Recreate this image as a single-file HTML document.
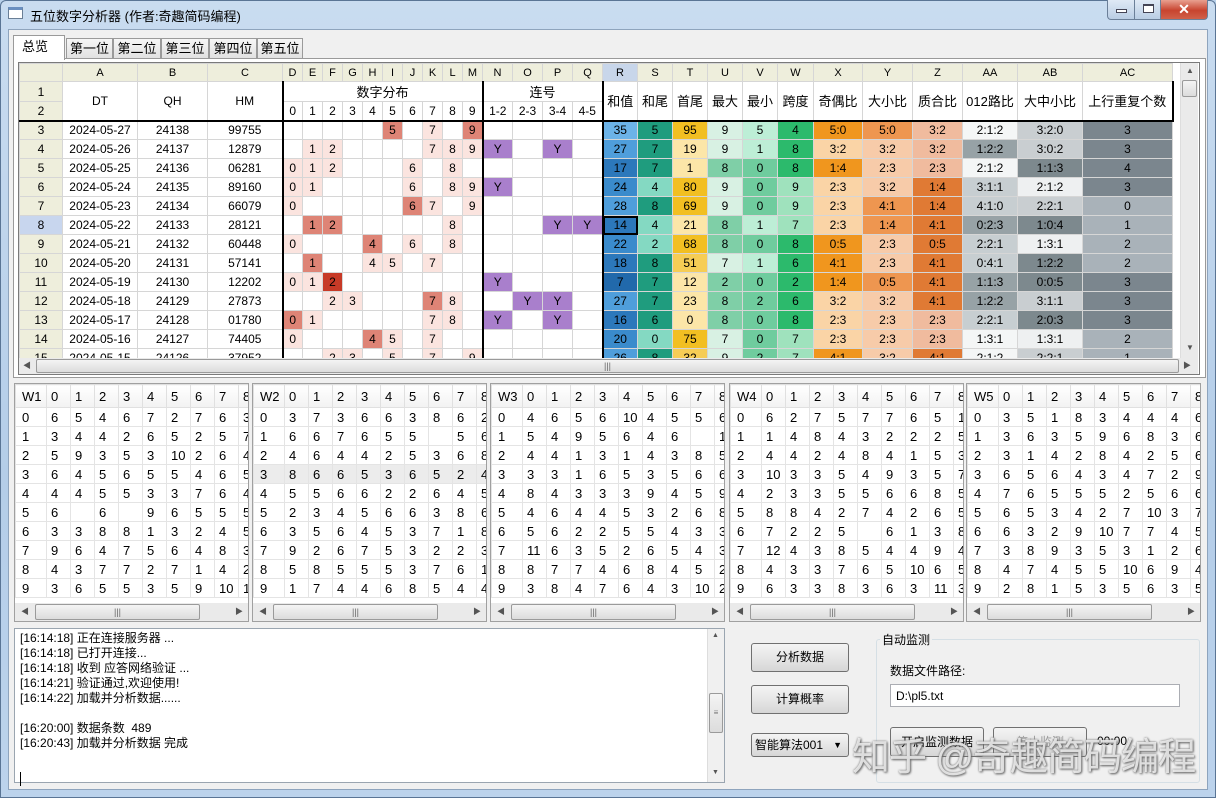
<!DOCTYPE html>
<html><head><meta charset="utf-8">
<style>
*{box-sizing:border-box;margin:0;padding:0}
body{width:1216px;height:798px;overflow:hidden;background:#b9d1ea;font-family:"Liberation Sans","Noto Sans CJK SC",sans-serif;font-size:12px;color:#000;position:relative}
.frame{position:absolute;left:0;top:0;width:1216px;height:798px;background:linear-gradient(#c9dcf0,#b4cde8 60%,#bcd3ec);border:1px solid #5a7595;border-radius:6px 6px 0 0}
.title{position:absolute;left:30px;top:6px;font-size:13px;color:#000}
.ticon{position:absolute;left:8px;top:7px;width:15px;height:12px;border:1px solid #6a7f96;background:#fff;border-top:3px solid #6a8fc0}
.tb{position:absolute;top:0;height:20px;border:1px solid #6b7f98;border-top:none}
.client{position:absolute;left:8px;top:29px;width:1200px;height:761px;background:#f0f0f0;border:1px solid #8ea4bd}
.tab{position:absolute;top:38px;height:21px;border:1px solid #9a9a9a;border-bottom:none;background:linear-gradient(#f6f6f6,#e0e0e0);font-size:13px;text-align:center;line-height:20px}
.tabpanel{position:absolute;left:13px;top:58px;width:1193px;height:320px;border:1px solid #9a9a9a;background:#fff}
.g{position:absolute;left:19px;top:63px;width:1161px;height:295px;overflow:hidden;background:#fff}
.g table{border-collapse:collapse;table-layout:fixed;width:1153px}
.g td,.g th{height:19px;padding:0;border:1px solid #d6d6d6;text-align:center;font-size:12px;font-weight:normal;white-space:nowrap;overflow:hidden}
.g tr.h th{background:#eeeedc;height:18px;font-size:11px}
.g th.rh{background:#eeeedc}
.g .hd{font-size:13px}
.bl{border-left:2px solid #000!important}
.bb td,.bb th.rh{border-bottom:2px solid #000!important}
.l{background:#fbe4df}.d{background:#de8476}.dd{background:#c73a27}.y{background:#a97fcc}
.r1{background:#6cb3e8}.r2{background:#4f9edb}.r3{background:#3a8bcc}.r4{background:#2c78bb}.r5{background:#2169ab}
.s1{background:#1f9c7e}.s2{background:#84d9c2}
.t1{background:#f2bf22}.t2{background:#f6cd55}.t3{background:#fce6a8}
.u1{background:#d8f1e3}.u2{background:#7fcfa7}
.v1{background:#bdeed6}.v2{background:#6fcc9e}
.w1{background:#2cba6c}.w2{background:#9fe2bd}
.x1{background:#f0961e}.x2{background:#fad4a6}
.y1{background:#ee9650}.y2{background:#f7cba9}
.z1{background:#f0bb9e}.z2{background:#e07a34}
.a1{background:#f4f6f6}.a2{background:#c7ced1}.a3{background:#97a2a6}
.b1{background:#eef0f1}.b2{background:#c9ced1}.b3{background:#7d898e}
.c1{background:#7b868e}.c2{background:#a9b2b9}
.sel{outline:2px solid #000;outline-offset:-2px}
.vs{position:absolute;background:#eaeaea;border-left:1px solid #ddd}
.hs{position:absolute;background:#eaeaea}
.thumb{position:absolute;background:linear-gradient(#f4f4f4,#dcdcdc);border:1px solid #9a9a9a;border-radius:2px}
.wp{position:absolute;top:383px;width:235px;height:239px;border:1px solid #a0a0a0;background:#fff;overflow:hidden}
.wp table{border-collapse:collapse;table-layout:fixed;width:247px;font-size:13px}
.wp td{height:19px;border:1px solid #e4e4e4;padding-left:4px;white-space:nowrap;overflow:hidden}
.wp tr:first-child td{height:23px;background:linear-gradient(#fff,#f2f2f2);border-color:#e0e0e0}
.wp td:first-child{padding-left:6px}
.wp .gr td{background:#ececec}
.btn{position:absolute;border:1px solid #707070;border-radius:3px;background:linear-gradient(#f4f4f4,#e6e6e6 50%,#d6d6d6);text-align:center;font-size:12px}
.log{position:absolute;left:14px;top:628px;width:711px;height:155px;border:1px solid #9aa5b0;background:#fff;font-size:12px;line-height:15px;padding:2px 0 0 5px}
</style></head><body>
<div class="frame"></div>
<div class="ticon"></div>
<div class="title">五位数字分析器 (作者:奇趣简码编程)</div>
<div class="tb" style="left:1107px;width:28px;background:linear-gradient(#dfe9f5,#b9cde4);border-radius:0 0 0 4px"><div style="position:absolute;left:8px;top:9px;width:11px;height:4px;border:1px solid #445;background:#fff"></div></div>
<div class="tb" style="left:1134px;width:27px;background:linear-gradient(#dfe9f5,#b9cde4)"><div style="position:absolute;left:8px;top:4px;width:11px;height:9px;border:1px solid #445;border-top-width:2px;background:#fff"></div></div>
<div class="tb" style="left:1160px;width:48px;background:linear-gradient(#e8a090,#c8442f 55%,#d0614a);border-radius:0 0 4px 0;color:#fff;font-weight:bold;font-size:14px;text-align:center;line-height:18px">✕</div>
<div class="client"></div>

<div class="tab" style="left:66px;width:47px">第一位</div>
<div class="tab" style="left:113px;width:48px">第二位</div>
<div class="tab" style="left:161px;width:48px">第三位</div>
<div class="tab" style="left:209px;width:48px">第四位</div>
<div class="tab" style="left:257px;width:46px">第五位</div>
<div class="tabpanel"></div>
<div class="tab" style="left:13px;top:35px;width:52px;height:25px;background:#fff;text-align:left;padding-left:8px;line-height:22px;z-index:2">总览</div>

<div style="position:absolute;left:18px;top:62px;width:1182px;height:313px;border:1px solid #7a7a7a;background:#fff"></div>
<div class="g"><table>
<colgroup><col style="width:43px"><col style="width:75px"><col style="width:70px"><col style="width:75px"><col span="10" style="width:20px"><col span="4" style="width:30px"><col style="width:35px"><col style="width:35px"><col style="width:35px"><col style="width:35px"><col style="width:35px"><col style="width:36px"><col style="width:49px"><col style="width:50px"><col style="width:50px"><col style="width:55px"><col style="width:65px"><col style="width:90px"></colgroup>
<tr class="h"><th></th><th>A</th><th>B</th><th>C</th><th>D</th><th>E</th><th>F</th><th>G</th><th>H</th><th>I</th><th>J</th><th>K</th><th>L</th><th>M</th><th>N</th><th>O</th><th>P</th><th>Q</th><th style="background:#c8d6ea">R</th><th>S</th><th>T</th><th>U</th><th>V</th><th>W</th><th>X</th><th>Y</th><th>Z</th><th>AA</th><th>AB</th><th>AC</th></tr>
<tr><th class="rh">1</th><td rowspan="2" style="border-bottom:2px solid #000">DT</td><td rowspan="2" style="border-bottom:2px solid #000">QH</td><td rowspan="2" style="border-bottom:2px solid #000">HM</td><td colspan="10" class="bl hd">数字分布</td><td colspan="4" class="bl hd">连号</td><td rowspan="2" class="bl hd" style="border-bottom:2px solid #000">和值</td><td rowspan="2" class="hd" style="border-bottom:2px solid #000">和尾</td><td rowspan="2" class="hd" style="border-bottom:2px solid #000">首尾</td><td rowspan="2" class="hd" style="border-bottom:2px solid #000">最大</td><td rowspan="2" class="hd" style="border-bottom:2px solid #000">最小</td><td rowspan="2" class="hd" style="border-bottom:2px solid #000">跨度</td><td rowspan="2" class="hd" style="border-bottom:2px solid #000">奇偶比</td><td rowspan="2" class="hd" style="border-bottom:2px solid #000">大小比</td><td rowspan="2" class="hd" style="border-bottom:2px solid #000">质合比</td><td rowspan="2" class="hd" style="border-bottom:2px solid #000">012路比</td><td rowspan="2" class="hd" style="border-bottom:2px solid #000">大中小比</td><td rowspan="2" class="hd" style="border-bottom:2px solid #000;border-right:2px solid #000">上行重复个数</td></tr>
<tr class="bb"><th class="rh">2</th><td class="bl">0</td><td>1</td><td>2</td><td>3</td><td>4</td><td>5</td><td>6</td><td>7</td><td>8</td><td>9</td><td class="bl">1-2</td><td>2-3</td><td>3-4</td><td>4-5</td></tr>
<tr><th class="rh">3</th><td>2024-05-27</td><td>24138</td><td>99755</td><td class="bl"></td><td></td><td></td><td></td><td></td><td class="d">5</td><td></td><td class="l">7</td><td></td><td class="d">9</td><td class="bl"></td><td></td><td></td><td></td><td class="bl r1">35</td><td class="s1">5</td><td class="t1">95</td><td class="u1">9</td><td class="v1">5</td><td class="w1">4</td><td class="x1">5:0</td><td class="y1">5:0</td><td class="z1">3:2</td><td class="a1">2:1:2</td><td class="b2">3:2:0</td><td class="c1">3</td></tr>
<tr><th class="rh">4</th><td>2024-05-26</td><td>24137</td><td>12879</td><td class="bl"></td><td class="l">1</td><td class="l">2</td><td></td><td></td><td></td><td></td><td class="l">7</td><td class="l">8</td><td class="l">9</td><td class="bl y">Y</td><td></td><td class="y">Y</td><td></td><td class="bl r2">27</td><td class="s1">7</td><td class="t3">19</td><td class="u1">9</td><td class="v1">1</td><td class="w1">8</td><td class="x2">3:2</td><td class="y2">3:2</td><td class="z1">3:2</td><td class="a3">1:2:2</td><td class="b2">3:0:2</td><td class="c1">3</td></tr>
<tr><th class="rh">5</th><td>2024-05-25</td><td>24136</td><td>06281</td><td class="bl l">0</td><td class="l">1</td><td class="l">2</td><td></td><td></td><td></td><td class="l">6</td><td></td><td class="l">8</td><td></td><td class="bl"></td><td></td><td></td><td></td><td class="bl r4">17</td><td class="s1">7</td><td class="t3">1</td><td class="u2">8</td><td class="v2">0</td><td class="w1">8</td><td class="x1">1:4</td><td class="y2">2:3</td><td class="z1">2:3</td><td class="a1">2:1:2</td><td class="b3">1:1:3</td><td class="c1">4</td></tr>
<tr><th class="rh">6</th><td>2024-05-24</td><td>24135</td><td>89160</td><td class="bl l">0</td><td class="l">1</td><td></td><td></td><td></td><td></td><td class="l">6</td><td></td><td class="l">8</td><td class="l">9</td><td class="bl y">Y</td><td></td><td></td><td></td><td class="bl r3">24</td><td class="s2">4</td><td class="t1">80</td><td class="u1">9</td><td class="v2">0</td><td class="w2">9</td><td class="x2">2:3</td><td class="y2">3:2</td><td class="z2">1:4</td><td class="a2">3:1:1</td><td class="b1">2:1:2</td><td class="c1">3</td></tr>
<tr><th class="rh">7</th><td>2024-05-23</td><td>24134</td><td>66079</td><td class="bl l">0</td><td></td><td></td><td></td><td></td><td></td><td class="d">6</td><td class="l">7</td><td></td><td class="l">9</td><td class="bl"></td><td></td><td></td><td></td><td class="bl r2">28</td><td class="s1">8</td><td class="t1">69</td><td class="u1">9</td><td class="v2">0</td><td class="w2">9</td><td class="x2">2:3</td><td class="y1">4:1</td><td class="z2">1:4</td><td class="a2">4:1:0</td><td class="b2">2:2:1</td><td class="c2">0</td></tr>
<tr><th class="rh" style="background:#c8d6ee">8</th><td>2024-05-22</td><td>24133</td><td>28121</td><td class="bl"></td><td class="d">1</td><td class="d">2</td><td></td><td></td><td></td><td></td><td></td><td class="l">8</td><td></td><td class="bl"></td><td></td><td class="y">Y</td><td class="y">Y</td><td class="bl r4 sel">14</td><td class="s2">4</td><td class="t3">21</td><td class="u2">8</td><td class="v1">1</td><td class="w2">7</td><td class="x2">2:3</td><td class="y1">1:4</td><td class="z2">4:1</td><td class="a3">0:2:3</td><td class="b3">1:0:4</td><td class="c2">1</td></tr>
<tr><th class="rh">9</th><td>2024-05-21</td><td>24132</td><td>60448</td><td class="bl l">0</td><td></td><td></td><td></td><td class="d">4</td><td></td><td class="l">6</td><td></td><td class="l">8</td><td></td><td class="bl"></td><td></td><td></td><td></td><td class="bl r3">22</td><td class="s2">2</td><td class="t1">68</td><td class="u2">8</td><td class="v2">0</td><td class="w1">8</td><td class="x1">0:5</td><td class="y2">2:3</td><td class="z2">0:5</td><td class="a2">2:2:1</td><td class="b1">1:3:1</td><td class="c2">2</td></tr>
<tr><th class="rh">10</th><td>2024-05-20</td><td>24131</td><td>57141</td><td class="bl"></td><td class="d">1</td><td></td><td></td><td class="l">4</td><td class="l">5</td><td></td><td class="l">7</td><td></td><td></td><td class="bl"></td><td></td><td></td><td></td><td class="bl r4">18</td><td class="s1">8</td><td class="t2">51</td><td class="u1">7</td><td class="v1">1</td><td class="w1">6</td><td class="x1">4:1</td><td class="y2">2:3</td><td class="z2">4:1</td><td class="a2">0:4:1</td><td class="b3">1:2:2</td><td class="c2">2</td></tr>
<tr><th class="rh">11</th><td>2024-05-19</td><td>24130</td><td>12202</td><td class="bl l">0</td><td class="l">1</td><td class="dd">2</td><td></td><td></td><td></td><td></td><td></td><td></td><td></td><td class="bl y">Y</td><td></td><td></td><td></td><td class="bl r5">7</td><td class="s1">7</td><td class="t3">12</td><td class="u2">2</td><td class="v2">0</td><td class="w1">2</td><td class="x1">1:4</td><td class="y1">0:5</td><td class="z2">4:1</td><td class="a3">1:1:3</td><td class="b3">0:0:5</td><td class="c1">3</td></tr>
<tr><th class="rh">12</th><td>2024-05-18</td><td>24129</td><td>27873</td><td class="bl"></td><td></td><td class="l">2</td><td class="l">3</td><td></td><td></td><td></td><td class="d">7</td><td class="l">8</td><td></td><td class="bl"></td><td class="y">Y</td><td class="y">Y</td><td></td><td class="bl r2">27</td><td class="s1">7</td><td class="t3">23</td><td class="u2">8</td><td class="v2">2</td><td class="w1">6</td><td class="x2">3:2</td><td class="y2">3:2</td><td class="z2">4:1</td><td class="a3">1:2:2</td><td class="b2">3:1:1</td><td class="c1">3</td></tr>
<tr><th class="rh">13</th><td>2024-05-17</td><td>24128</td><td>01780</td><td class="bl d">0</td><td class="l">1</td><td></td><td></td><td></td><td></td><td></td><td class="l">7</td><td class="l">8</td><td></td><td class="bl y">Y</td><td></td><td class="y">Y</td><td></td><td class="bl r4">16</td><td class="s1">6</td><td class="t3">0</td><td class="u2">8</td><td class="v2">0</td><td class="w1">8</td><td class="x2">2:3</td><td class="y2">2:3</td><td class="z1">2:3</td><td class="a2">2:2:1</td><td class="b3">2:0:3</td><td class="c1">3</td></tr>
<tr><th class="rh">14</th><td>2024-05-16</td><td>24127</td><td>74405</td><td class="bl l">0</td><td></td><td></td><td></td><td class="d">4</td><td class="l">5</td><td></td><td class="l">7</td><td></td><td></td><td class="bl"></td><td></td><td></td><td></td><td class="bl r3">20</td><td class="s2">0</td><td class="t1">75</td><td class="u1">7</td><td class="v2">0</td><td class="w2">7</td><td class="x2">2:3</td><td class="y2">2:3</td><td class="z1">2:3</td><td class="a1">1:3:1</td><td class="b1">1:3:1</td><td class="c2">2</td></tr>
<tr><th class="rh">15</th><td>2024-05-15</td><td>24126</td><td>37952</td><td class="bl"></td><td></td><td class="l">2</td><td class="l">3</td><td></td><td class="l">5</td><td></td><td class="l">7</td><td></td><td class="l">9</td><td class="bl"></td><td></td><td></td><td></td><td class="bl r2">26</td><td class="s1">8</td><td class="t2">32</td><td class="u1">9</td><td class="v2">2</td><td class="w2">7</td><td class="x1">4:1</td><td class="y2">3:2</td><td class="z2">4:1</td><td class="a1">2:1:2</td><td class="b2">2:2:1</td><td class="c2">1</td></tr>
</table></div>
<div class="vs" style="left:1180px;top:63px;width:18px;height:295px"><div style="position:absolute;left:5px;top:3px;font-size:8px;color:#555">▲</div><div class="thumb" style="left:1px;top:17px;width:15px;height:17px"></div><div style="position:absolute;left:5px;top:280px;font-size:8px;color:#555">▼</div></div>
<div class="hs" style="left:19px;top:358px;width:1179px;height:16px"><div style="position:absolute;left:4px;top:2px;font-size:8px;color:#555">◀</div><div class="thumb" style="left:17px;top:1px;width:1143px;height:14px;text-align:center;font-size:9px;line-height:12px;color:#666">|||</div><div style="position:absolute;left:1164px;top:2px;font-size:8px;color:#555">▶</div></div>

<!-- W panels -->
<div class="wp" style="left:14px"><table><colgroup><col style="width:31px"><col span="9" style="width:24px"></colgroup>
<tr><td>W1</td><td>0</td><td>1</td><td>2</td><td>3</td><td>4</td><td>5</td><td>6</td><td>7</td><td>8</td></tr>
<tr><td>0</td><td>6</td><td>5</td><td>4</td><td>6</td><td>7</td><td>2</td><td>7</td><td>6</td><td>3</td></tr>
<tr><td>1</td><td>3</td><td>4</td><td>4</td><td>2</td><td>6</td><td>5</td><td>2</td><td>5</td><td>7</td></tr>
<tr><td>2</td><td>5</td><td>9</td><td>3</td><td>5</td><td>3</td><td>10</td><td>2</td><td>6</td><td>4</td></tr>
<tr><td>3</td><td>6</td><td>4</td><td>5</td><td>6</td><td>5</td><td>5</td><td>4</td><td>6</td><td>5</td></tr>
<tr><td>4</td><td>4</td><td>4</td><td>5</td><td>5</td><td>3</td><td>3</td><td>7</td><td>6</td><td>4</td></tr>
<tr><td>5</td><td>6</td><td></td><td>6</td><td></td><td>9</td><td>6</td><td>5</td><td>5</td><td>5</td></tr>
<tr><td>6</td><td>3</td><td>3</td><td>8</td><td>8</td><td>1</td><td>3</td><td>2</td><td>4</td><td>5</td></tr>
<tr><td>7</td><td>9</td><td>6</td><td>4</td><td>7</td><td>5</td><td>6</td><td>4</td><td>8</td><td>3</td></tr>
<tr><td>8</td><td>4</td><td>3</td><td>7</td><td>7</td><td>2</td><td>7</td><td>1</td><td>4</td><td>2</td></tr>
<tr><td>9</td><td>3</td><td>6</td><td>5</td><td>5</td><td>3</td><td>5</td><td>9</td><td>10</td><td>1</td></tr>
</table><div class="hs" style="left:0;top:219px;width:233px;height:18px"><div style="position:absolute;left:6px;top:3px;font-size:8px;color:#555">◀</div><div class="thumb" style="left:20px;top:1px;width:165px;height:16px;text-align:center;font-size:9px;line-height:14px;color:#666">|||</div><div style="position:absolute;left:220px;top:3px;font-size:8px;color:#555">▶</div></div></div>

<div class="wp" style="left:252px"><table><colgroup><col style="width:31px"><col span="9" style="width:24px"></colgroup>
<tr><td>W2</td><td>0</td><td>1</td><td>2</td><td>3</td><td>4</td><td>5</td><td>6</td><td>7</td><td>8</td></tr>
<tr><td>0</td><td>3</td><td>7</td><td>3</td><td>6</td><td>6</td><td>3</td><td>8</td><td>6</td><td>2</td></tr>
<tr><td>1</td><td>6</td><td>6</td><td>7</td><td>6</td><td>5</td><td>5</td><td></td><td>5</td><td>6</td></tr>
<tr><td>2</td><td>4</td><td>6</td><td>4</td><td>4</td><td>2</td><td>5</td><td>3</td><td>6</td><td>8</td></tr>
<tr class="gr"><td>3</td><td>8</td><td>6</td><td>6</td><td>5</td><td>3</td><td>6</td><td>5</td><td>2</td><td>4</td></tr>
<tr><td>4</td><td>5</td><td>5</td><td>6</td><td>6</td><td>2</td><td>2</td><td>6</td><td>4</td><td>5</td></tr>
<tr><td>5</td><td>2</td><td>3</td><td>4</td><td>5</td><td>6</td><td>6</td><td>3</td><td>8</td><td>6</td></tr>
<tr><td>6</td><td>3</td><td>5</td><td>6</td><td>4</td><td>5</td><td>3</td><td>7</td><td>1</td><td>8</td></tr>
<tr><td>7</td><td>9</td><td>2</td><td>6</td><td>7</td><td>5</td><td>3</td><td>2</td><td>2</td><td>3</td></tr>
<tr><td>8</td><td>5</td><td>8</td><td>5</td><td>5</td><td>5</td><td>3</td><td>7</td><td>6</td><td>1</td></tr>
<tr><td>9</td><td>1</td><td>7</td><td>4</td><td>4</td><td>6</td><td>8</td><td>5</td><td>4</td><td>4</td></tr>
</table><div class="hs" style="left:0;top:219px;width:233px;height:18px"><div style="position:absolute;left:6px;top:3px;font-size:8px;color:#555">◀</div><div class="thumb" style="left:20px;top:1px;width:165px;height:16px;text-align:center;font-size:9px;line-height:14px;color:#666">|||</div><div style="position:absolute;left:220px;top:3px;font-size:8px;color:#555">▶</div></div></div>

<div class="wp" style="left:490px"><table><colgroup><col style="width:31px"><col span="9" style="width:24px"></colgroup>
<tr><td>W3</td><td>0</td><td>1</td><td>2</td><td>3</td><td>4</td><td>5</td><td>6</td><td>7</td><td>8</td></tr>
<tr><td>0</td><td>4</td><td>6</td><td>5</td><td>6</td><td>10</td><td>4</td><td>5</td><td>5</td><td>6</td></tr>
<tr><td>1</td><td>5</td><td>4</td><td>9</td><td>5</td><td>6</td><td>4</td><td>6</td><td></td><td>1</td></tr>
<tr><td>2</td><td>4</td><td>4</td><td>1</td><td>3</td><td>1</td><td>4</td><td>3</td><td>8</td><td>5</td></tr>
<tr><td>3</td><td>3</td><td>3</td><td>1</td><td>6</td><td>5</td><td>3</td><td>5</td><td>6</td><td>6</td></tr>
<tr><td>4</td><td>8</td><td>4</td><td>3</td><td>3</td><td>3</td><td>9</td><td>4</td><td>5</td><td>9</td></tr>
<tr><td>5</td><td>4</td><td>6</td><td>4</td><td>4</td><td>5</td><td>3</td><td>2</td><td>6</td><td>8</td></tr>
<tr><td>6</td><td>5</td><td>6</td><td>2</td><td>2</td><td>5</td><td>5</td><td>4</td><td>3</td><td>3</td></tr>
<tr><td>7</td><td>11</td><td>6</td><td>3</td><td>5</td><td>2</td><td>6</td><td>5</td><td>4</td><td>3</td></tr>
<tr><td>8</td><td>8</td><td>7</td><td>7</td><td>4</td><td>6</td><td>8</td><td>4</td><td>5</td><td>2</td></tr>
<tr><td>9</td><td>3</td><td>8</td><td>4</td><td>7</td><td>6</td><td>4</td><td>3</td><td>10</td><td>2</td></tr>
</table><div class="hs" style="left:0;top:219px;width:233px;height:18px"><div style="position:absolute;left:6px;top:3px;font-size:8px;color:#555">◀</div><div class="thumb" style="left:20px;top:1px;width:165px;height:16px;text-align:center;font-size:9px;line-height:14px;color:#666">|||</div><div style="position:absolute;left:220px;top:3px;font-size:8px;color:#555">▶</div></div></div>

<div class="wp" style="left:729px"><table><colgroup><col style="width:31px"><col span="9" style="width:24px"></colgroup>
<tr><td>W4</td><td>0</td><td>1</td><td>2</td><td>3</td><td>4</td><td>5</td><td>6</td><td>7</td><td>8</td></tr>
<tr><td>0</td><td>6</td><td>2</td><td>7</td><td>5</td><td>7</td><td>7</td><td>6</td><td>5</td><td>1</td></tr>
<tr><td>1</td><td>1</td><td>4</td><td>8</td><td>4</td><td>3</td><td>2</td><td>2</td><td>2</td><td>5</td></tr>
<tr><td>2</td><td>4</td><td>4</td><td>2</td><td>4</td><td>8</td><td>4</td><td>1</td><td>5</td><td>3</td></tr>
<tr><td>3</td><td>10</td><td>3</td><td>3</td><td>5</td><td>4</td><td>9</td><td>3</td><td>5</td><td>7</td></tr>
<tr><td>4</td><td>2</td><td>3</td><td>3</td><td>5</td><td>5</td><td>6</td><td>6</td><td>8</td><td>5</td></tr>
<tr><td>5</td><td>8</td><td>8</td><td>4</td><td>2</td><td>7</td><td>4</td><td>2</td><td>6</td><td>5</td></tr>
<tr><td>6</td><td>7</td><td>2</td><td>2</td><td>5</td><td></td><td>6</td><td>1</td><td>3</td><td>8</td></tr>
<tr><td>7</td><td>12</td><td>4</td><td>3</td><td>8</td><td>5</td><td>4</td><td>4</td><td>9</td><td>4</td></tr>
<tr><td>8</td><td>4</td><td>3</td><td>3</td><td>7</td><td>6</td><td>5</td><td>10</td><td>6</td><td>5</td></tr>
<tr><td>9</td><td>6</td><td>3</td><td>3</td><td>8</td><td>3</td><td>6</td><td>3</td><td>11</td><td>3</td></tr>
</table><div class="hs" style="left:0;top:219px;width:233px;height:18px"><div style="position:absolute;left:6px;top:3px;font-size:8px;color:#555">◀</div><div class="thumb" style="left:20px;top:1px;width:165px;height:16px;text-align:center;font-size:9px;line-height:14px;color:#666">|||</div><div style="position:absolute;left:220px;top:3px;font-size:8px;color:#555">▶</div></div></div>

<div class="wp" style="left:966px"><table><colgroup><col style="width:31px"><col span="9" style="width:24px"></colgroup>
<tr><td>W5</td><td>0</td><td>1</td><td>2</td><td>3</td><td>4</td><td>5</td><td>6</td><td>7</td><td>8</td></tr>
<tr><td>0</td><td>3</td><td>5</td><td>1</td><td>8</td><td>3</td><td>4</td><td>4</td><td>4</td><td>6</td></tr>
<tr><td>1</td><td>3</td><td>6</td><td>3</td><td>5</td><td>9</td><td>6</td><td>8</td><td>3</td><td>6</td></tr>
<tr><td>2</td><td>3</td><td>1</td><td>4</td><td>2</td><td>8</td><td>4</td><td>2</td><td>5</td><td>6</td></tr>
<tr><td>3</td><td>6</td><td>5</td><td>6</td><td>4</td><td>3</td><td>4</td><td>7</td><td>2</td><td>9</td></tr>
<tr><td>4</td><td>7</td><td>6</td><td>5</td><td>5</td><td>5</td><td>2</td><td>5</td><td>6</td><td>6</td></tr>
<tr><td>5</td><td>6</td><td>5</td><td>3</td><td>4</td><td>2</td><td>7</td><td>10</td><td>3</td><td>7</td></tr>
<tr><td>6</td><td>6</td><td>3</td><td>2</td><td>9</td><td>10</td><td>7</td><td>7</td><td>4</td><td>5</td></tr>
<tr><td>7</td><td>3</td><td>8</td><td>9</td><td>3</td><td>5</td><td>3</td><td>1</td><td>2</td><td>6</td></tr>
<tr><td>8</td><td>4</td><td>7</td><td>4</td><td>5</td><td>5</td><td>10</td><td>6</td><td>9</td><td>4</td></tr>
<tr><td>9</td><td>2</td><td>8</td><td>1</td><td>5</td><td>3</td><td>5</td><td>6</td><td>3</td><td>5</td></tr>
</table><div class="hs" style="left:0;top:219px;width:233px;height:18px"><div style="position:absolute;left:6px;top:3px;font-size:8px;color:#555">◀</div><div class="thumb" style="left:20px;top:1px;width:165px;height:16px;text-align:center;font-size:9px;line-height:14px;color:#666">|||</div><div style="position:absolute;left:220px;top:3px;font-size:8px;color:#555">▶</div></div></div>

<!-- log -->
<div class="log">[16:14:18] 正在连接服务器 ...<br>[16:14:18] 已打开连接...<br>[16:14:18] 收到 应答网络验证 ...<br>[16:14:21] 验证通过,欢迎使用!<br>[16:14:22] 加载并分析数据......<br><br>[16:20:00] 数据条数 &nbsp;489<br>[16:20:43] 加载并分析数据 完成<br><br><span style="display:inline-block;width:1px;height:14px;background:#000;margin-top:6px"></span></div>
<div class="vs" style="left:707px;top:629px;width:17px;height:153px;background:#f0f0f0"><div style="position:absolute;left:4px;top:3px;font-size:7px;color:#555">▲</div><div class="thumb" style="left:1px;top:64px;width:14px;height:40px;text-align:center;font-size:8px;line-height:38px;color:#777">≡</div><div style="position:absolute;left:4px;top:140px;font-size:7px;color:#555">▼</div></div>

<div class="btn" style="left:751px;top:643px;width:98px;height:29px;line-height:27px">分析数据</div>
<div class="btn" style="left:751px;top:685px;width:98px;height:29px;line-height:27px">计算概率</div>
<div class="btn" style="left:751px;top:733px;width:98px;height:24px;line-height:22px;text-align:left;padding-left:3px">智能算法001<span style="position:absolute;right:6px;font-size:9px">▼</span></div>

<div style="position:absolute;left:876px;top:639px;width:324px;height:144px;border:1px solid #d5dfe5;border-radius:3px"></div>
<div style="position:absolute;left:880px;top:631px;background:#f0f0f0;padding:0 2px;font-size:12px">自动监测</div>
<div style="position:absolute;left:890px;top:662px;font-size:12px">数据文件路径:</div>
<div style="position:absolute;left:890px;top:684px;width:290px;height:23px;border:1px solid #abadb3;background:#fff;padding:4px 0 0 5px;font-size:12px">D:\pl5.txt</div>
<div class="btn" style="left:890px;top:727px;width:94px;height:30px;line-height:28px">开启监测数据</div>
<div class="btn" style="left:993px;top:727px;width:94px;height:30px;line-height:28px;color:#999">停止监测</div>
<div style="position:absolute;left:1097px;top:734px;font-size:12px">00:00</div>
<div style="position:absolute;left:852px;top:726px;font-size:38px;color:rgba(255,255,255,.75);text-shadow:0 0 2px #777,1px 1px 2px #666;letter-spacing:-1px;white-space:nowrap">知乎 @奇趣简码编程</div>
</body></html>
